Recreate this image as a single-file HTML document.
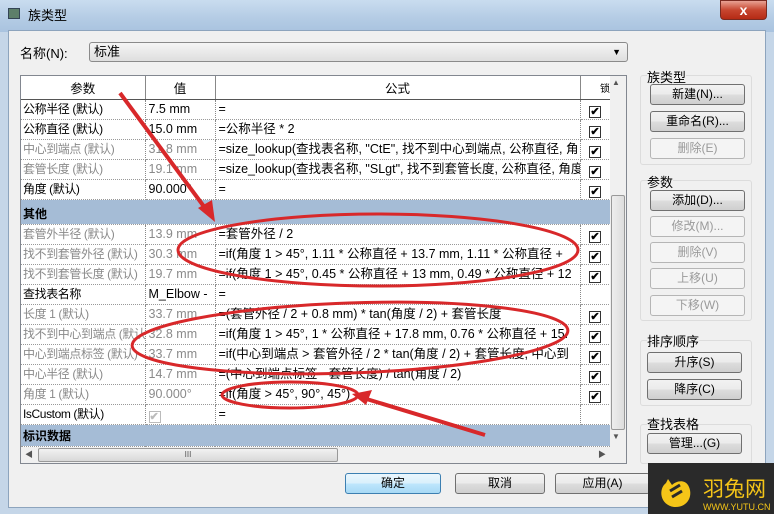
<!DOCTYPE html>
<html><head><meta charset="utf-8"><style>
*{margin:0;padding:0;box-sizing:border-box}
body{width:774px;height:514px;overflow:hidden;background:#c5d6e8;font-family:"Liberation Sans","Noto Sans CJK SC",sans-serif;font-size:12px;color:#000;position:relative}
.a{position:absolute}
.title{left:0;top:0;width:774px;height:32px;background:linear-gradient(180deg,#c9dcef,#b3cbe4 60%,#a9c3df)}
.client{left:8px;top:30px;width:758px;height:478px;background:#f0f0f0;border:1px solid #8da4bd}
.btn{position:absolute;height:21px;border:1px solid #707070;border-radius:3px;background:linear-gradient(#f2f2f2,#ebebeb 50%,#dddddd 51%,#cfcfcf);text-align:center;line-height:19px;font-size:12px}
.dis{color:#9a9a9a;border-color:#b5b5b5;background:#f4f4f4}
.grp{position:absolute;border:1px solid #dcdcdc;border-radius:3px}
.lbl{position:absolute;font-size:13px}
table{border-collapse:collapse;table-layout:fixed;position:absolute;left:21px;top:76px;width:589px}
td{height:20px;border-right:1px dotted #888;border-bottom:1px dotted #999;padding-left:3px;white-space:nowrap;overflow:hidden;font-size:12.5px;line-height:19px}
td:first-child{font-size:12px;letter-spacing:-0.4px;padding-left:2px}
td.c{padding:0;text-align:center}
.g td{color:#8a8a8a}
.g td:nth-child(3){color:#000}
th{height:23px;font-weight:normal;border-right:1px solid #888;border-bottom:1px solid #555;background:#fff;font-size:12.5px}
tr.h td{background:#a5bcd6;font-weight:bold;height:25px;border-right:none;vertical-align:bottom;letter-spacing:0}
.cb{display:inline-block;width:12px;height:12px;border:1px solid #333;background:#fff;position:relative;top:2px;font-size:11px;line-height:10px;font-weight:bold;color:#000}
</style></head><body>
<div class="a title"></div>
<div class="a" style="left:8px;top:8px;width:12px;height:11px;background:#5d7f6a;border:1px solid #345"></div>
<div class="a" style="left:28px;top:5px;font-size:13px">族类型</div>
<div class="a" style="left:720px;top:0;width:47px;height:20px;background:linear-gradient(#e8a193,#c7462f 50%,#b52a14);border:1px solid #7a2a20;border-radius:0 0 4px 4px;color:#fff;text-align:center;font-weight:bold;line-height:19px;font-size:14px">x</div>
<div class="a client"></div>
<div class="lbl" style="left:20px;top:43px">名称(N):</div>
<div class="a" style="left:89px;top:42px;width:539px;height:20px;border:1px solid #8a8a8a;border-radius:3px;background:linear-gradient(#f5f5f5,#dedede);padding-left:4px;line-height:18px;font-size:13px">标准<span style="position:absolute;right:6px;top:0;font-size:9px">▼</span></div>
<div class="a" style="left:20px;top:75px;width:607px;height:389px;border:1px solid #828790;background:#fff"></div>
<table>
<colgroup><col style="width:124px"><col style="width:70px"><col style="width:365px"><col style="width:30px"></colgroup>
<tr><th>参数</th><th>值</th><th>公式</th><th style="border-right:none;text-align:right;font-size:10px">锁</th></tr>
<tr><td>公称半径 (默认)</td><td>7.5 mm</td><td>=</td><td class="c"><span class="cb">✔</span></td></tr>
<tr><td>公称直径 (默认)</td><td>15.0 mm</td><td>=公称半径 * 2</td><td class="c"><span class="cb">✔</span></td></tr>
<tr class="g"><td>中心到端点 (默认)</td><td>31.8 mm</td><td>=size_lookup(查找表名称, "CtE", 找不到中心到端点, 公称直径, 角</td><td class="c"><span class="cb">✔</span></td></tr>
<tr class="g"><td>套管长度 (默认)</td><td>19.1 mm</td><td>=size_lookup(查找表名称, "SLgt", 找不到套管长度, 公称直径, 角度</td><td class="c"><span class="cb">✔</span></td></tr>
<tr><td>角度 (默认)</td><td>90.000°</td><td>=</td><td class="c"><span class="cb">✔</span></td></tr>
<tr class="h"><td colspan="4">其他</td></tr>
<tr class="g"><td>套管外半径 (默认)</td><td>13.9 mm</td><td>=套管外径 / 2</td><td class="c"><span class="cb">✔</span></td></tr>
<tr class="g"><td>找不到套管外径 (默认)</td><td>30.3 mm</td><td>=if(角度 1 &gt; 45°, 1.11 * 公称直径 + 13.7 mm, 1.11 * 公称直径 +</td><td class="c"><span class="cb">✔</span></td></tr>
<tr class="g"><td>找不到套管长度 (默认)</td><td>19.7 mm</td><td>=if(角度 1 &gt; 45°, 0.45 * 公称直径 + 13 mm, 0.49 * 公称直径 + 12</td><td class="c"><span class="cb">✔</span></td></tr>
<tr><td>查找表名称</td><td>M_Elbow -</td><td>=</td><td class="c"></td></tr>
<tr class="g"><td>长度 1 (默认)</td><td>33.7 mm</td><td>=(套管外径 / 2 + 0.8 mm) * tan(角度 / 2) + 套管长度</td><td class="c"><span class="cb">✔</span></td></tr>
<tr class="g"><td>找不到中心到端点 (默认)</td><td>32.8 mm</td><td>=if(角度 1 &gt; 45°, 1 * 公称直径 + 17.8 mm, 0.76 * 公称直径 + 15.</td><td class="c"><span class="cb">✔</span></td></tr>
<tr class="g"><td>中心到端点标签 (默认)</td><td>33.7 mm</td><td>=if(中心到端点 &gt; 套管外径 / 2 * tan(角度 / 2) + 套管长度, 中心到</td><td class="c"><span class="cb">✔</span></td></tr>
<tr class="g"><td>中心半径 (默认)</td><td>14.7 mm</td><td>=(中心到端点标签 - 套管长度) / tan(角度 / 2)</td><td class="c"><span class="cb">✔</span></td></tr>
<tr class="g"><td>角度 1 (默认)</td><td>90.000°</td><td>=if(角度 &gt; 45°, 90°, 45°)</td><td class="c"><span class="cb">✔</span></td></tr>
<tr><td>IsCustom (默认)</td><td><span class="cb" style="border-color:#bbb;color:#bbb">✔</span></td><td>=</td><td class="c"></td></tr>
<tr class="h"><td colspan="4" style="height:22px">标识数据</td></tr>
</table>
<div class="a" style="left:610px;top:76px;width:16px;height:371px;background:#f0f0f0"></div>
<div class="a" style="left:612px;top:78px;font-size:8px;color:#555">▲</div>
<div class="a" style="left:611px;top:195px;width:14px;height:235px;border:1px solid #999;border-radius:2px;background:linear-gradient(90deg,#eee,#ddd)"></div>
<div class="a" style="left:612px;top:432px;font-size:8px;color:#555">▼</div>
<div class="a" style="left:21px;top:447px;width:605px;height:16px;background:#f0f0f0"></div>
<div class="a" style="left:38px;top:448px;width:300px;height:14px;border:1px solid #999;border-radius:2px;background:linear-gradient(#f2f2f2,#d8d8d8);text-align:center;font-size:8px;line-height:12px;color:#555">III</div>
<div class="a" style="left:25px;top:449px;font-size:8px;color:#555">◀</div>
<div class="a" style="left:598px;top:449px;font-size:8px;color:#555">▶</div>
<div class="grp" style="left:640px;top:75px;width:112px;height:90px"></div>
<div class="lbl" style="left:647px;top:67px;background:#f0f0f0">族类型</div>
<div class="btn" style="left:650px;top:84px;width:95px">新建(N)...</div>
<div class="btn" style="left:650px;top:111px;width:95px">重命名(R)...</div>
<div class="btn dis" style="left:650px;top:138px;width:95px">删除(E)</div>
<div class="grp" style="left:640px;top:180px;width:112px;height:141px"></div>
<div class="lbl" style="left:647px;top:172px;background:#f0f0f0">参数</div>
<div class="btn" style="left:650px;top:190px;width:95px">添加(D)...</div>
<div class="btn dis" style="left:650px;top:216px;width:95px">修改(M)...</div>
<div class="btn dis" style="left:650px;top:242px;width:95px">删除(V)</div>
<div class="btn dis" style="left:650px;top:268px;width:95px">上移(U)</div>
<div class="btn dis" style="left:650px;top:295px;width:95px">下移(W)</div>
<div class="grp" style="left:640px;top:340px;width:112px;height:66px"></div>
<div class="lbl" style="left:647px;top:331px;background:#f0f0f0">排序顺序</div>
<div class="btn" style="left:647px;top:352px;width:95px">升序(S)</div>
<div class="btn" style="left:647px;top:379px;width:95px">降序(C)</div>
<div class="grp" style="left:640px;top:424px;width:112px;height:40px"></div>
<div class="lbl" style="left:647px;top:414px;background:#f0f0f0">查找表格</div>
<div class="btn" style="left:647px;top:433px;width:95px">管理...(G)</div>
<div class="btn" style="left:345px;top:473px;width:96px;border-color:#3c7fb1;background:linear-gradient(#eaf6fd,#d9f0fc 50%,#bee6fd 51%,#a7d9f5)">确定</div>
<div class="btn" style="left:455px;top:473px;width:90px">取消</div>
<div class="btn" style="left:555px;top:473px;width:95px">应用(A)</div>
<div class="a" style="left:648px;top:463px;width:126px;height:51px;background:#2a2a2a"></div>
<svg class="a" style="left:648px;top:463px" width="126" height="51">
<path d="M18 20 C10 26 12 42 26 44 C40 45 46 32 40 22 C36 16 28 18 24 22 L20 16 Z" fill="#f5c518"/>
<path d="M22 28 L32 22 M24 34 L34 28" stroke="#2a2a2a" stroke-width="3"/>
<text x="55" y="33" fill="#f5c518" font-size="21" font-family="Noto Sans CJK SC,sans-serif">羽兔网</text>
<text x="55" y="47" fill="#f5c518" font-size="9" font-family="Liberation Sans,sans-serif">WWW.YUTU.CN</text>
</svg>
<svg class="a" style="left:0;top:0" width="774" height="514">
<g fill="none" stroke="#d8282a" stroke-width="3">
<ellipse cx="378" cy="250" rx="200" ry="36"/>
<ellipse cx="350" cy="338" rx="218" ry="35" transform="rotate(-2 350 338)"/>
<ellipse cx="290" cy="395" rx="68" ry="13"/>
</g>
<path d="M120 93 L208 212" stroke="#d8282a" stroke-width="4"/>
<path d="M198 208 L215 222 L212 200 Z" fill="#d8282a"/>
<path d="M485 435 L360 397" stroke="#d8282a" stroke-width="4"/>
<path d="M352 394 L372 390 L366 405 Z" fill="#d8282a"/>
</svg>
</body></html>
